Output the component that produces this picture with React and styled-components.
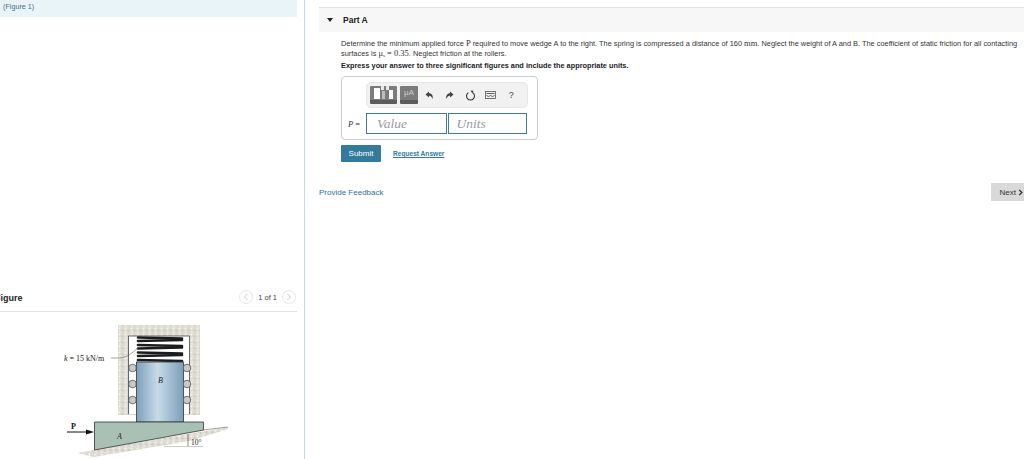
import React from 'react';
import styled, { createGlobalStyle } from 'styled-components';

const Global = createGlobalStyle`
  html, body {
    margin: 0;
    padding: 0;
    background: #fff;
    overflow: hidden;
  }
  body {
    font-family: "Liberation Sans", Arial, sans-serif;
    color: #222;
  }
`;

const Page = styled.div`
  display: flex;
  width: 1024px;
  height: 459px;
  overflow: hidden;
`;

const LeftPanel = styled.aside`
  flex: 0 0 305px;
  height: 459px;
  box-sizing: border-box;
  border-right: 1px solid #c8d7e6;
  display: flex;
  flex-direction: column;
  overflow: hidden;
`;

const Banner = styled.div`
  width: 297px;
  height: 17px;
  background: #e8f4f7;
  font-size: 7.2px;
  line-height: 13px;
  padding-left: 3px;
  box-sizing: border-box;
  color: #4a6f86;
`;

const FigureHeader = styled.div`
  width: 297px;
  height: 21px;
  margin-top: 273px;
  border-bottom: 1px solid #dfe3e6;
  display: flex;
  align-items: flex-start;
  justify-content: space-between;
`;

const FigureTitle = styled.h2`
  margin: 2px 0 0 -5px;
  font-size: 9px;
  line-height: 12px;
  font-weight: 700;
  color: #222;
`;

const Pager = styled.div`
  display: flex;
  align-items: center;
  gap: 5px;
  margin-right: 1px;
  font-size: 7.5px;
  color: #444;
`;

const PagerButton = styled.span`
  width: 14px;
  height: 14px;
  border: 1px solid #e4e7ea;
  border-radius: 50%;
  box-sizing: border-box;
  display: flex;
  align-items: center;
  justify-content: center;
`;

const FigureWrap = styled.div`
  display: flex;
  margin: 3px 0 0 40px;
`;

const RightPanel = styled.main`
  flex: 0 0 719px;
  box-sizing: border-box;
  padding: 7px 0 0 14px;
  display: flex;
  flex-direction: column;
`;

const PartHeader = styled.div`
  height: 24px;
  border-top: 1px solid #e2e2e2;
  background: #f7f7f7;
  display: flex;
  align-items: center;
  gap: 10px;
  padding-left: 8px;
`;

const Caret = styled.span`
  width: 0;
  height: 0;
  border-left: 3px solid transparent;
  border-right: 3px solid transparent;
  border-top: 4px solid #222;
`;

const PartTitle = styled.span`
  font-size: 8.5px;
  font-weight: 700;
  color: #222;
`;

const PartBody = styled.div`
  padding: 7px 0 0 22px;
`;

const Prompt = styled.p`
  margin: 0;
  font-size: 7.4px;
  line-height: 9.5px;
  color: #333;
  white-space: nowrap;
`;

const MathSerif = styled.span`
  font-family: "Liberation Serif", serif;
  font-size: 8.5px;
  line-height: 0;
`;

const MathSub = styled.span`
  font-size: 5px;
  vertical-align: -1px;
  line-height: 0;
`;

const Instruction = styled.p`
  margin: 3px 0 0;
  font-size: 7.33px;
  line-height: 10px;
  font-weight: 700;
  color: #222;
`;

const AnswerBox = styled.div`
  width: 197px;
  height: 64px;
  margin-top: 5px;
  border: 1px solid #ccc;
  border-radius: 4px;
  box-sizing: border-box;
  padding: 5px 9px 0 24px;
`;

const Toolbar = styled.div`
  height: 26px;
  background: #f1f1f1;
  border: 1px solid #e6e6e6;
  border-radius: 5px;
  box-sizing: border-box;
  display: flex;
  align-items: center;
  padding-left: 3px;
`;

const TemplateButton = styled.span`
  width: ${(p) => p.$w}px;
  height: 18px;
  margin-right: ${(p) => p.$gap}px;
  background: linear-gradient(#7b7b7b 0 78%, #5c5c5c 78%);
  border-radius: 1px;
  display: flex;
  justify-content: center;
  flex-shrink: 0;
  font-size: 8px;
  line-height: 13px;
  color: #cfcfcf;
`;

const ToolIcon = styled.span`
  width: 20.5px;
  display: flex;
  justify-content: center;
  align-items: center;
  font-size: 9px;
  color: #444;
`;

const InputRow = styled.div`
  display: flex;
  align-items: center;
  margin-top: 5px;
  position: relative;
`;

const VarLabel = styled.span`
  position: absolute;
  left: -18px;
  font-family: "Liberation Serif", serif;
  font-size: 8.5px;
  color: #333;
  i { font-style: italic; }
`;

const Field = styled.div`
  width: ${(p) => p.$w}px;
  height: 21px;
  border: 1px solid #3f7f9e;
  box-sizing: border-box;
  padding-left: ${(p) => p.$pad}px;
  margin-right: 1px;
  font-family: "Liberation Serif", serif;
  font-style: italic;
  font-size: 13.5px;
  line-height: 19px;
  color: #9a9a9a;
`;

const Actions = styled.div`
  display: flex;
  align-items: center;
  gap: 12px;
  margin-top: 5px;
`;

const Submit = styled.button`
  width: 40px;
  height: 17px;
  padding: 0;
  border: none;
  border-radius: 1px;
  background: #337a9e;
  color: #fff;
  font-family: inherit;
  font-size: 8px;
  font-weight: 400;
`;

const RequestLink = styled.a`
  font-size: 6.6px;
  font-weight: 700;
  color: #337a9e;
  text-decoration: underline;
`;

const FooterRow = styled.div`
  display: flex;
  justify-content: space-between;
  align-items: center;
  height: 18px;
  margin-top: 21px;
`;

const Feedback = styled.a`
  font-size: 8px;
  color: #337096;
`;

const NextButton = styled.span`
  width: 33px;
  height: 18px;
  background: #d9d9d9;
  display: flex;
  align-items: center;
  justify-content: flex-end;
  gap: 1px;
  font-size: 8px;
  color: #333;
`;

const Chevron = ({ dir, color, size = 8, width = 1 }) => (
  <svg width={size} height={size} viewBox="0 0 8 8" fill="none" stroke={color} strokeWidth={width}>
    <path d={dir === 'left' ? 'M5.5 1 L2.5 4 L5.5 7' : 'M2.5 1 L5.5 4 L2.5 7'} />
  </svg>
);

const UndoIcon = ({ flip }) => (
  <svg width="9" height="9" viewBox="0 0 9 9" style={flip ? { transform: 'scaleX(-1)' } : undefined}>
    <path d="M0.5 3.5 L4 0.5 V2.3 C6.8 2.3 8.3 4.5 7.6 8.2 C7 6 6 4.8 4 4.8 V6.6 Z" fill="#444" />
  </svg>
);

const ResetIcon = () => (
  <svg width="11" height="11" viewBox="0 0 11 11" fill="none" stroke="#333" strokeWidth="1.1">
    <path d="M3.4 2.6 A4 4 0 1 0 7.6 2.6" />
    <path d="M5.6 0.6 L8.4 0.8 L7.4 3.4" fill="#333" stroke="none" />
  </svg>
);

const KeyboardIcon = () => (
  <svg width="11" height="8" viewBox="0 0 11 8">
    <rect x="0.5" y="0.5" width="10" height="7" fill="#eee" stroke="#555" strokeWidth="0.8" />
    <path d="M1.5 2.5 H9.5 M1.5 4 L3.5 6 L5.5 4 L7.5 6 L9.5 4" stroke="#555" strokeWidth="0.9" fill="none" />
  </svg>
);

const TemplateIcon = () => (
  <svg width="27" height="14" viewBox="0 0 27 14" style={{ display: 'block' }}>
    <rect x="4" y="2" width="6" height="11" fill="#fff" />
    <rect x="11" y="0" width="3" height="4" fill="#e8e8e8" />
    <rect x="12" y="5" width="3" height="8" fill="#bdbdbd" />
    <rect x="16" y="0" width="3" height="4" fill="#e8e8e8" />
    <rect x="19" y="4" width="4" height="9" fill="#fff" />
  </svg>
);

const FigureDrawing = () => (
  <svg width="200" height="144" viewBox="0 0 200 144" style={{ display: 'block' }}>
    <defs>
      <pattern id="grit" width="6" height="6" patternUnits="userSpaceOnUse">
        <rect width="6" height="6" fill="#dedbd2" />
        <circle cx="1.5" cy="1.5" r="1" fill="#f6f5f0" />
        <circle cx="4.5" cy="3.5" r="0.9" fill="#c8c5bb" />
        <circle cx="2" cy="5" r="0.7" fill="#fbfaf6" />
      </pattern>
      <linearGradient id="block" x1="0" x2="1" y1="0" y2="0">
        <stop offset="0" stopColor="#7f9fbd" />
        <stop offset="0.45" stopColor="#c6dbe8" />
        <stop offset="1" stopColor="#7d9dba" />
      </linearGradient>
    </defs>
    {/* walls and channel */}
    <rect x="78" y="10" width="82" height="90" fill="url(#grit)" />
    <path d="M88.5 99 V21 H149.5 V99" fill="#fff" stroke="#444" strokeWidth="0.8" />
    {/* ground under the wedge */}
    <path d="M37 138 L188 112 L188 114 L150 126 L54 142 Z" fill="url(#grit)" />
    {/* spring */}
    {[22.5, 26, 30, 33.5, 37.5, 41, 45].map((y, i) => (
      <path key={y} d={`M98 ${y} L142 ${y + (i % 2 ? -1 : 1)}`} stroke="#1c1c1c" strokeWidth="2.6" strokeLinecap="round" />
    ))}
    {/* k label leader */}
    <path d="M71 43 H80 C88 42 92 38 98 33" fill="none" stroke="#666" strokeWidth="0.6" />
    <text x="24" y="46" fontFamily="Liberation Serif, serif" fontSize="8" fill="#222">
      <tspan fontStyle="italic">k</tspan> = 15 kN/m
    </text>
    {/* block B */}
    <rect x="96.5" y="47" width="47" height="60" fill="url(#block)" stroke="#333" strokeWidth="0.8" />
    <text x="118" y="68" fontFamily="Liberation Serif, serif" fontStyle="italic" fontSize="8" fill="#222">B</text>
    {/* rollers */}
    {[53, 69, 85].map((y) => (
      <g key={y}>
        <circle cx="92.5" cy={y} r="3.8" fill="#c9c9c9" stroke="#444" strokeWidth="0.7" />
        <circle cx="147" cy={y} r="3.8" fill="#c9c9c9" stroke="#444" strokeWidth="0.7" />
      </g>
    ))}
    {/* wedge A */}
    <path d="M54.5 107 H163.5 V115 L54.5 135 Z" fill="#a9c1b5" stroke="#333" strokeWidth="0.8" />
    <path d="M163 115 L188 112" stroke="#666" strokeWidth="0.6" />
    <path d="M124 131.5 H163" stroke="#999" strokeWidth="0.5" />
    <path d="M148 119 V131" stroke="#444" strokeWidth="0.6" />
    <text x="77" y="124" fontFamily="Liberation Serif, serif" fontStyle="italic" fontSize="8" fill="#222">A</text>
    <text x="151" y="130" fontFamily="Liberation Serif, serif" fontSize="7.5" fill="#222">10°</text>
    {/* force P */}
    <text x="31" y="114" fontFamily="Liberation Serif, serif" fontWeight="700" fontSize="8" fill="#111">P</text>
    <path d="M27 117 H48" stroke="#111" strokeWidth="1" />
    <path d="M54 117 L46 114.5 V119.5 Z" fill="#111" />
  </svg>
);

export default function App() {
  return (
    <Page>
      <Global />
      <LeftPanel>
        <Banner>(Figure 1)</Banner>
        <FigureHeader>
          <FigureTitle>Figure</FigureTitle>
          <Pager>
            <PagerButton><Chevron dir="left" color="#c5ccd2" /></PagerButton>
            <span>1 of 1</span>
            <PagerButton><Chevron dir="right" color="#c5ccd2" /></PagerButton>
          </Pager>
        </FigureHeader>
        <FigureWrap>
          <FigureDrawing />
        </FigureWrap>
      </LeftPanel>
      <RightPanel>
        <PartHeader>
          <Caret />
          <PartTitle>Part A</PartTitle>
        </PartHeader>
        <PartBody>
          <Prompt>
            Determine the minimum applied force <MathSerif>P</MathSerif> required to move wedge A to the right. The spring is
            compressed a distance of 160 <MathSerif>mm</MathSerif>. Neglect the weight of A and B. The coefficient of static
            friction for all contacting<br />surfaces is <MathSerif>μ<MathSub>s</MathSub> = 0.35</MathSerif>. Neglect friction at the rollers.
          </Prompt>
          <Instruction>Express your answer to three significant figures and include the appropriate units.</Instruction>
          <AnswerBox>
            <Toolbar>
              <TemplateButton $w={27} $gap={3}><TemplateIcon /></TemplateButton>
              <TemplateButton $w={18} $gap={1}>μA</TemplateButton>
              <ToolIcon><UndoIcon /></ToolIcon>
              <ToolIcon><UndoIcon flip /></ToolIcon>
              <ToolIcon><ResetIcon /></ToolIcon>
              <ToolIcon><KeyboardIcon /></ToolIcon>
              <ToolIcon>?</ToolIcon>
            </Toolbar>
            <InputRow>
              <VarLabel><i>P</i> =</VarLabel>
              <Field $w={81} $pad={10}>Value</Field>
              <Field $w={80} $pad={8}>Units</Field>
            </InputRow>
          </AnswerBox>
          <Actions>
            <Submit>Submit</Submit>
            <RequestLink>Request Answer</RequestLink>
          </Actions>
        </PartBody>
        <FooterRow>
          <Feedback>Provide Feedback</Feedback>
          <NextButton>Next <Chevron dir="right" color="#333" size={7} width={1.6} /></NextButton>
        </FooterRow>
      </RightPanel>
    </Page>
  );
}
